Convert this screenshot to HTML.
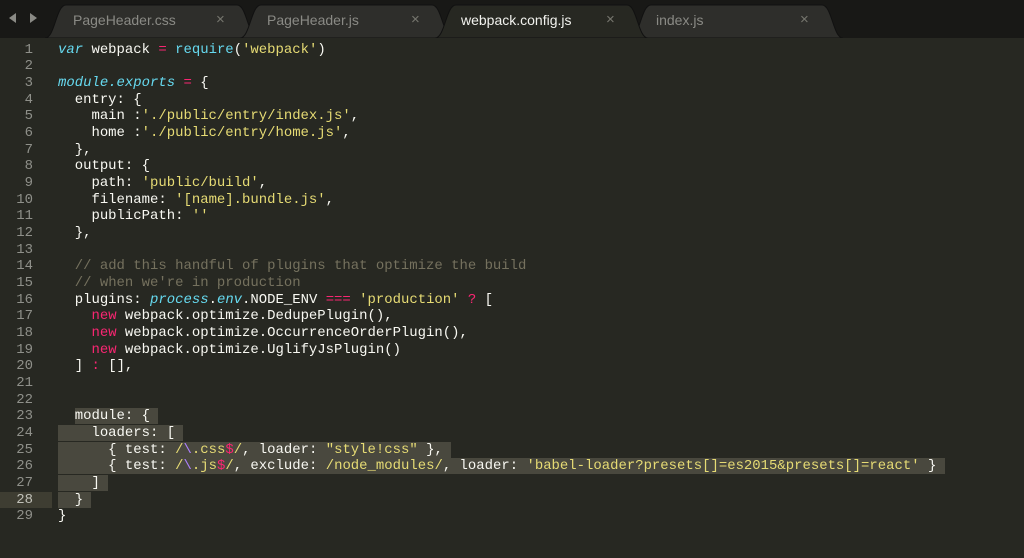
<!DOCTYPE html>
<html><head><meta charset="utf-8"><style>
body{margin:0;width:1024px;height:558px;background:#272822;overflow:hidden;position:relative;font-family:"Liberation Mono",monospace}
#tabs{position:absolute;left:0;top:0;width:1024px;height:38px;background:#181816}
.tt{position:absolute;top:12px;font-family:"Liberation Sans",sans-serif;font-size:14px;color:#8a8a85}
.tx{position:absolute;top:11px;font-family:"Liberation Sans",sans-serif;font-size:15px;color:#77776f}
#code{position:absolute;left:0;top:41.5px;width:1024px}
.l{height:16.68px;line-height:16.68px;font-size:13.95px;color:#F8F8F2;white-space:pre;position:relative}
.n{position:absolute;left:0;width:33px;text-align:right;color:#8F908A}
.c{position:absolute;left:58px}
.k{color:#F92672}.s{color:#E6DB74}.i{color:#66D9EF;font-style:italic}.m{color:#75715E}.p{color:#AE81FF}
.sel{background:#49483E}
</style></head><body>
<div id="tabs">
<svg width="1024" height="38" style="position:absolute;left:0;top:0">
<path d="M16 13 L9 18 L16 23Z M30 13 L37 18 L30 23Z" fill="#8a8a85"/>
<path d="M45 38 C55 38 56 5 66 5 L237 5 C247 5 248 38 258 38Z" fill="#2e2e2b" stroke="#111" stroke-width="1"/>
<path d="M240 38 C250 38 251 5 261 5 L432 5 C442 5 443 38 453 38Z" fill="#2e2e2b" stroke="#111" stroke-width="1"/>
<path d="M630 38 C640 38 641 5 651 5 L822 5 C832 5 833 38 843 38Z" fill="#2e2e2b" stroke="#111" stroke-width="1"/>
<path d="M435 38 C445 38 446 5 456 5 L627 5 C637 5 638 38 648 38Z" fill="#272822" stroke="#111" stroke-width="1"/>
</svg>
<span class="tt" style="left:73px">PageHeader.css</span><span class="tx" style="left:216px">×</span>
<span class="tt" style="left:267px">PageHeader.js</span><span class="tx" style="left:411px">×</span>
<span class="tt" style="left:461px;color:#f2f2ee">webpack.config.js</span><span class="tx" style="left:606px">×</span>
<span class="tt" style="left:656px">index.js</span><span class="tx" style="left:800px">×</span>
</div>
<div id="code">
<div class="l"><span class="n">1</span><span class="c"><span class="i">var</span> webpack <span class="k">=</span> <span class="i" style="font-style:normal">require</span>(<span class="s">'webpack'</span>)</span></div>
<div class="l"><span class="n">2</span></div>
<div class="l"><span class="n">3</span><span class="c"><span class="i">module</span><span class="i">.exports</span> <span class="k">=</span> {</span></div>
<div class="l"><span class="n">4</span><span class="c">  entry: {</span></div>
<div class="l"><span class="n">5</span><span class="c">    main :<span class="s">'./public/entry/index.js'</span>,</span></div>
<div class="l"><span class="n">6</span><span class="c">    home :<span class="s">'./public/entry/home.js'</span>,</span></div>
<div class="l"><span class="n">7</span><span class="c">  },</span></div>
<div class="l"><span class="n">8</span><span class="c">  output: {</span></div>
<div class="l"><span class="n">9</span><span class="c">    path: <span class="s">'public/build'</span>,</span></div>
<div class="l"><span class="n">10</span><span class="c">    filename: <span class="s">'[name].bundle.js'</span>,</span></div>
<div class="l"><span class="n">11</span><span class="c">    publicPath: <span class="s">''</span></span></div>
<div class="l"><span class="n">12</span><span class="c">  },</span></div>
<div class="l"><span class="n">13</span></div>
<div class="l"><span class="n">14</span><span class="c">  <span class="m">// add this handful of plugins that optimize the build</span></span></div>
<div class="l"><span class="n">15</span><span class="c">  <span class="m">// when we're in production</span></span></div>
<div class="l"><span class="n">16</span><span class="c">  plugins: <span class="i">process</span>.<span class="i">env</span>.NODE_ENV <span class="k">===</span> <span class="s">'production'</span> <span class="k">?</span> [</span></div>
<div class="l"><span class="n">17</span><span class="c">    <span class="k">new</span> webpack.optimize.DedupePlugin(),</span></div>
<div class="l"><span class="n">18</span><span class="c">    <span class="k">new</span> webpack.optimize.OccurrenceOrderPlugin(),</span></div>
<div class="l"><span class="n">19</span><span class="c">    <span class="k">new</span> webpack.optimize.UglifyJsPlugin()</span></div>
<div class="l"><span class="n">20</span><span class="c">  ] <span class="k">:</span> [],</span></div>
<div class="l"><span class="n">21</span></div>
<div class="l"><span class="n">22</span></div>
<div class="l"><span class="n">23</span><span class="c">  <span class="sel">module: { </span></span></div>
<div class="l"><span class="n">24</span><span class="c"><span class="sel">    loaders: [ </span></span></div>
<div class="l"><span class="n">25</span><span class="c"><span class="sel">      { test: <span class="s">/<span class="p">\</span>.css<span class="k">$</span>/</span>, loader: <span class="s">"style!css"</span> }, </span></span></div>
<div class="l"><span class="n">26</span><span class="c"><span class="sel">      { test: <span class="s">/<span class="p">\</span>.js<span class="k">$</span>/</span>, exclude: <span class="s">/node_modules/</span>, loader: <span class="s">'babel-loader?presets[]=es2015&amp;presets[]=react'</span> } </span></span></div>
<div class="l"><span class="n">27</span><span class="c"><span class="sel">    ] </span></span></div>
<div class="l" ><span style="position:absolute;left:0;top:0;width:52px;height:16.68px;background:#3e3d32"></span><span class="n" style="color:#c0c0b8">28</span><span class="c"><span class="sel">  } </span></span></div>
<div class="l"><span class="n">29</span><span class="c">}</span></div>
</div>
</body></html>
